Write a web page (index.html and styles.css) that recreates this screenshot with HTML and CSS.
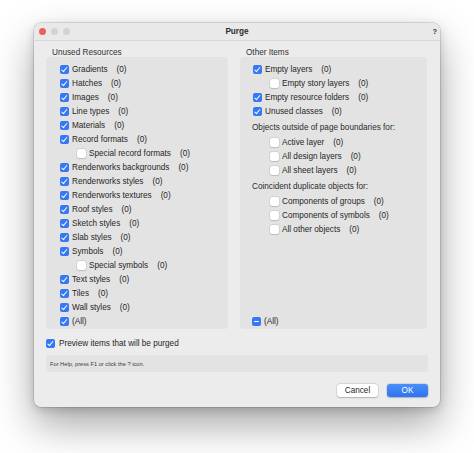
FILE: index.html
```html
<!DOCTYPE html>
<html lang="en">
<head>
<meta charset="UTF-8" />
<meta name="viewport" content="width=device-width, initial-scale=1" />
<title>Purge</title>
<link rel="stylesheet" href="styles.css">
</head>
<body>
  <div class="window">
    <div class="titlebar">
      <div class="lights">
        <span class="light red"></span>
        <span class="light"></span>
        <span class="light"></span>
      </div>
      <div class="title">Purge</div>
      <div class="help">?</div>
    </div>

    <div class="content">
      <div class="columns">
        <section class="group">
          <div class="group-title">Unused Resources</div>
          <div class="panel left">
            <label class="row"><span class="box on"></span>Gradients<span class="count">(0)</span></label>
            <label class="row"><span class="box on"></span>Hatches<span class="count">(0)</span></label>
            <label class="row"><span class="box on"></span>Images<span class="count">(0)</span></label>
            <label class="row"><span class="box on"></span>Line types<span class="count">(0)</span></label>
            <label class="row"><span class="box on"></span>Materials<span class="count">(0)</span></label>
            <label class="row"><span class="box on"></span>Record formats<span class="count">(0)</span></label>
            <label class="row sub"><span class="box"></span>Special record formats<span class="count">(0)</span></label>
            <label class="row"><span class="box on"></span>Renderworks backgrounds<span class="count">(0)</span></label>
            <label class="row"><span class="box on"></span>Renderworks styles<span class="count">(0)</span></label>
            <label class="row"><span class="box on"></span>Renderworks textures<span class="count">(0)</span></label>
            <label class="row"><span class="box on"></span>Roof styles<span class="count">(0)</span></label>
            <label class="row"><span class="box on"></span>Sketch styles<span class="count">(0)</span></label>
            <label class="row"><span class="box on"></span>Slab styles<span class="count">(0)</span></label>
            <label class="row"><span class="box on"></span>Symbols<span class="count">(0)</span></label>
            <label class="row sub"><span class="box"></span>Special symbols<span class="count">(0)</span></label>
            <label class="row"><span class="box on"></span>Text styles<span class="count">(0)</span></label>
            <label class="row"><span class="box on"></span>Tiles<span class="count">(0)</span></label>
            <label class="row"><span class="box on"></span>Wall styles<span class="count">(0)</span></label>
            <label class="row"><span class="box on"></span>(All)</label>
          </div>
        </section>

        <section class="group">
          <div class="group-title">Other Items</div>
          <div class="panel right">
            <label class="row"><span class="box on"></span>Empty layers<span class="count">(0)</span></label>
            <label class="row sub"><span class="box"></span>Empty story layers<span class="count">(0)</span></label>
            <label class="row"><span class="box on"></span>Empty resource folders<span class="count">(0)</span></label>
            <label class="row"><span class="box on"></span>Unused classes<span class="count">(0)</span></label>
            <div class="sect">Objects outside of page boundaries for:</div>
            <label class="row sub"><span class="box"></span>Active layer<span class="count">(0)</span></label>
            <label class="row sub"><span class="box"></span>All design layers<span class="count">(0)</span></label>
            <label class="row sub"><span class="box"></span>All sheet layers<span class="count">(0)</span></label>
            <div class="sect">Coincident duplicate objects for:</div>
            <label class="row sub"><span class="box"></span>Components of groups<span class="count">(0)</span></label>
            <label class="row sub"><span class="box"></span>Components of symbols<span class="count">(0)</span></label>
            <label class="row sub"><span class="box"></span>All other objects<span class="count">(0)</span></label>
            <label class="row all"><span class="box mixed"></span>(All)</label>
          </div>
        </section>
      </div>

      <label class="row preview"><span class="box on"></span>Preview items that will be purged</label>

      <div class="helpbox">For Help, press F1 or click the ? icon.</div>

      <div class="buttons">
        <button class="btn">Cancel</button>
        <button class="btn primary">OK</button>
      </div>
    </div>
  </div>
</body>
</html>
```

FILE: styles.css
```css
html {
  background: #fff;
}

body {
  margin: 0;
  padding: 23px 0 50px 34px;
  font-family: "Liberation Sans", Arial, sans-serif;
  font-size: 8.2px;
  color: #262626;
}

.window {
  width: 406px;
  height: 384px;
  box-sizing: border-box;
  display: flex;
  flex-direction: column;
  background: #ececec;
  border-radius: 7px;
  box-shadow: 0 0 0 0.5px rgba(0, 0, 0, 0.22), 0 3px 10px rgba(0, 0, 0, 0.16),
    0 18px 40px rgba(0, 0, 0, 0.35);
}

/* title bar */
.titlebar {
  height: 17px;
  display: grid;
  grid-template-columns: 1fr auto 1fr;
  align-items: center;
  background: #e9e9e9;
  border-bottom: 1px solid #d8d8d8;
  border-radius: 7px 7px 0 0;
}

.lights {
  display: flex;
  gap: 5px;
  padding-left: 5px;
}

.light {
  width: 7px;
  height: 7px;
  border-radius: 50%;
  background: #d3d3d3;
}

.light.red {
  background: #ec5f57;
}

.title {
  font-weight: bold;
  color: #2b2b2b;
}

.help {
  justify-self: end;
  padding-right: 3px;
  font-weight: bold;
  font-size: 7.5px;
  color: #333;
}

/* body */
.content {
  flex: 1;
  display: flex;
  flex-direction: column;
  padding: 0 12px 10px;
}

.columns {
  display: grid;
  grid-template-columns: 182px 187px;
  gap: 12px;
}

.group-title {
  height: 16px;
  box-sizing: border-box;
  padding: 7px 0 0 6px;
  line-height: 10px;
  color: #333;
}

.panel {
  height: 272px;
  box-sizing: border-box;
  display: flex;
  flex-direction: column;
  background: #e3e3e3;
  border-radius: 4px;
  padding: 5px 0 1px 14px;
}

.panel.right {
  padding-left: 13px;
}

.row {
  height: 14px;
  display: flex;
  align-items: center;
  white-space: nowrap;
}

.row.sub {
  padding-left: 17px;
}

.row.all {
  margin-top: auto;
  margin-left: -1px;
}

.sect {
  height: 17px;
  display: flex;
  align-items: center;
  padding-top: 1px;
  box-sizing: border-box;
  margin-left: -1px;
  color: #2b2b2b;
}

.count {
  margin-left: 9px;
}

/* checkboxes */
.box {
  position: relative;
  flex: none;
  width: 9px;
  height: 9px;
  margin-right: 3px;
  border-radius: 2px;
  background: #fff;
  box-shadow: 0 0 0 0.5px rgba(0, 0, 0, 0.12), 0 0.5px 1px rgba(0, 0, 0, 0.12);
}

.box.on,
.box.mixed {
  background: #3478f6;
  box-shadow: none;
}

.box.on::after {
  content: "";
  position: absolute;
  left: 3px;
  top: 1px;
  width: 2px;
  height: 4.5px;
  border: solid #fff;
  border-width: 0 1.5px 1.5px 0;
  transform: rotate(40deg);
}

.box.mixed::after {
  content: "";
  position: absolute;
  left: 2px;
  right: 2px;
  top: 4px;
  height: 1.5px;
  background: #fff;
  border-radius: 1px;
}

.row.preview {
  margin-top: 7px;
}

.row.preview .box {
  margin-right: 4px;
}

.helpbox {
  height: 17px;
  margin-top: 5px;
  display: flex;
  align-items: center;
  padding-left: 4px;
  background: #e3e3e3;
  border-radius: 3px;
  font-size: 5.7px;
  color: #3a3a3a;
}

/* buttons */
.buttons {
  margin-top: 12px;
  display: flex;
  justify-content: flex-end;
  gap: 9px;
}

.btn {
  width: 41px;
  height: 13px;
  padding: 0;
  border: none;
  border-radius: 3px;
  font-family: inherit;
  font-size: 8.2px;
  color: #262626;
  background: #fff;
  box-shadow: 0 0 0 0.5px rgba(0, 0, 0, 0.12), 0 0.5px 1.5px rgba(0, 0, 0, 0.2);
}

.btn.primary {
  color: #fff;
  background: linear-gradient(#4a8ef9, #2f74f0);
}
```
